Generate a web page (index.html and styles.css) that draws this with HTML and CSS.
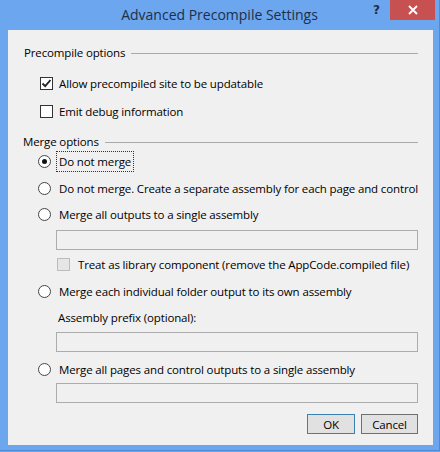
FILE: index.html
```html
<!DOCTYPE html>
<html lang="en">
<head>
    <meta charset="UTF-8">
    <title>Advanced Precompile Settings</title>
    <link rel="stylesheet" href="styles.css">
</head>
<body>
    <div class="window">
        <div class="titlebar">
            <span class="title">Advanced Precompile Settings</span>
            <span class="help">?</span>
            <span class="close">
                <svg viewBox="0 0 10 10" width="10" height="10">
                    <path d="M1 1L9 9M9 1L1 9" stroke="white" stroke-width="1.8"/>
                </svg>
            </span>
        </div>

        <div class="client">
            <div class="group-title">Precompile options</div>

            <div class="row check-row first-check">
                <span class="checkbox checked">
                    <svg viewBox="0 0 13 13" width="13" height="13">
                        <path d="M2.5 6.5L5.2 9.2L10.5 3" fill="none" stroke="#222" stroke-width="1.8"/>
                    </svg>
                </span>
                <span class="label">Allow precompiled site to be updatable</span>
            </div>
            <div class="row check-row second-check">
                <span class="checkbox"></span>
                <span class="label">Emit debug information</span>
            </div>

            <div class="group-title merge-title">Merge options</div>

            <div class="row radio-row r1">
                <span class="radio selected"></span>
                <span class="label focused">Do not merge</span>
            </div>
            <div class="row radio-row r2">
                <span class="radio"></span>
                <span class="label">Do not merge. Create a separate assembly for each page and control</span>
            </div>
            <div class="row radio-row r3">
                <span class="radio"></span>
                <span class="label">Merge all outputs to a single assembly</span>
            </div>
            <div class="textbox tb1"></div>
            <div class="row sub-check">
                <span class="checkbox disabled"></span>
                <span class="label">Treat as library component (remove the AppCode.compiled file)</span>
            </div>
            <div class="row radio-row r4">
                <span class="radio"></span>
                <span class="label">Merge each individual folder output to its own assembly</span>
            </div>
            <div class="row field-label">Assembly prefix (optional):</div>
            <div class="textbox tb2"></div>
            <div class="row radio-row r5">
                <span class="radio"></span>
                <span class="label">Merge all pages and control outputs to a single assembly</span>
            </div>
            <div class="textbox tb3"></div>

            <div class="buttons">
                <button class="btn default">OK</button>
                <button class="btn cancel">Cancel</button>
            </div>
        </div>
    </div>
</body>
</html>
```

FILE: styles.css
```css
body {
    margin: 0;
    background: #6ba6ee;
    font-family: "Open Sans", "Noto Sans", sans-serif;
    font-size: 11.5px;
    letter-spacing: -0.14px;
    color: #000;
}
.window {
    width: 440px;
    height: 451px;
    box-sizing: border-box;
    background: #6ba6ee;
    border-right: 1px solid #4f8ad6;
    border-bottom: 1px solid #4f8ad6;
    display: flex;
    flex-direction: column;
}
.titlebar {
    height: 30px;
    position: relative;
    display: flex;
    justify-content: center;
}
.title {
    font-size: 14px;
    letter-spacing: 0;
    color: #1d2f4a;
    line-height: 30px;
}
.help {
    position: absolute;
    left: 373px;
    top: 3px;
    font-family: "DejaVu Sans", sans-serif;
    font-weight: bold;
    font-size: 12px;
    color: #1d2f4a;
}
.close {
    position: absolute;
    left: 390px;
    top: 0;
    width: 45px;
    height: 20px;
    background: #c75050;
    display: flex;
    align-items: center;
    justify-content: center;
}
.client {
    margin: 0 6px 0 8px;
    height: 415px;
    background: #f0f0f0;
    display: flex;
    flex-direction: column;
    padding-left: 16px;
    padding-right: 15px;
}
.label {
    white-space: nowrap;
}
.group-title {
    height: 16px;
    line-height: 16px;
    display: flex;
    align-items: center;
    gap: 6px;
    margin-top: 15px;
    white-space: nowrap;
}
.group-title::after {
    content: "";
    flex: 1;
    border-top: 1px solid #a9a9a9;
    margin-top: 1px;
}
.merge-title {
    margin-top: 13px;
    margin-left: -1px;
}
.row {
    height: 20px;
    display: flex;
    align-items: center;
}
.check-row {
    padding-left: 16px;
}
.first-check { margin-top: 12px; }
.second-check { margin-top: 8px; }
.checkbox {
    width: 13px;
    height: 13px;
    flex: none;
    box-sizing: border-box;
    border: 1px solid #333;
    background: #fff;
    display: inline-flex;
    margin-right: 6px;
}
.checkbox svg {
    margin: -1px;
}
.checkbox.disabled {
    border-color: #bcbcbc;
    background: #e6e6e6;
}
.radio-row {
    padding-left: 14px;
}
.radio {
    width: 13px;
    height: 13px;
    flex: none;
    box-sizing: border-box;
    border: 1px solid #444;
    border-radius: 50%;
    background: #fff;
    margin-right: 8px;
    display: inline-flex;
    align-items: center;
    justify-content: center;
}
.radio.selected::after {
    content: "";
    width: 5px;
    height: 5px;
    border-radius: 50%;
    background: #111;
}
.label.focused {
    outline: 1px dotted #333;
    outline-offset: 1px;
    margin-left: -1px;
    padding: 1px 1px;
}
.r1 { margin-top: 1px; }
.r2 { margin-top: 7px; }
.r3 { margin-top: 6px; }
.r4 { margin-top: 7px; }
.r5 { margin-top: 7px; }
.textbox {
    margin-left: 32px;
    width: 362px;
    height: 20px;
    box-sizing: border-box;
    border: 1px solid #acacac;
    background: #f0f0f0;
}
.tb1 { margin-top: 6px; }
.tb2 { margin-top: 5px; }
.tb3 { margin-top: 4px; }
.sub-check {
    margin-top: 4px;
    padding-left: 33px;
}
.sub-check .checkbox {
    margin-right: 8px;
}
.field-label {
    margin-top: 6px;
    padding-left: 34px;
}
.buttons {
    margin-top: 11px;
    display: flex;
    justify-content: flex-end;
    gap: 6px;
    width: 394px;
}
.btn {
    height: 20px;
    box-sizing: border-box;
    font-family: inherit;
    font-size: 11.5px;
    letter-spacing: -0.14px;
    background: #e1e1e1;
    border: 1px solid #adadad;
    padding: 0;
    color: #000;
}
.btn.default {
    width: 48px;
    border-color: #3c7fb1;
}
.btn.cancel {
    width: 57px;
    border-color: #707070;
}
```
